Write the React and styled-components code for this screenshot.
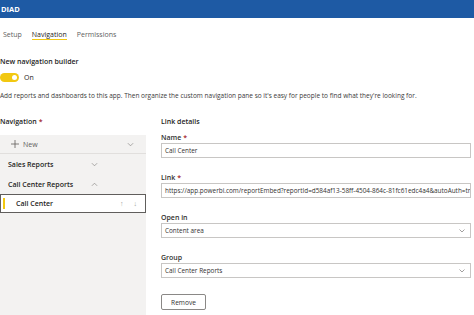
import React from "react";
import styled, { createGlobalStyle } from "styled-components";

const Global = createGlobalStyle`
  body {
    margin: 0;
    font-family: "Open Sans", "Noto Sans", sans-serif;
    color: #252423;
    background: #fff;
    overflow: hidden;
  }
  * { box-sizing: border-box; }
`;

const Page = styled.div`
  width: 474px;
  height: 315px;
  overflow: hidden;
  font-size: 7px;
  line-height: 9px;
`;

const Header = styled.div`
  height: 18px;
  background: #1e5aa4;
  color: #fff;
  font-weight: 700;
  font-size: 7.5px;
  display: flex;
  align-items: center;
  padding-left: 1px;
`;

const Tabs = styled.div`
  display: flex;
  gap: 10px;
  padding: 11.5px 0 0 3px;
`;

const Tab = styled.div`
  color: ${(p) => (p.active ? "#252423" : "#605e5c")};
  position: relative;
  height: 9px;
  &::after {
    content: "";
    display: ${(p) => (p.active ? "block" : "none")};
    position: absolute;
    left: 0;
    right: 0;
    bottom: -1.5px;
    height: 1.5px;
    background: #f2c811;
  }
`;

const Bold = styled.div`
  font-weight: 600;
  margin-top: ${(p) => p.mt || 0}px;
`;

const ToggleRow = styled.div`
  display: flex;
  align-items: center;
  gap: 5px;
  margin-top: 7px;
  height: 9px;
`;

const Toggle = styled.div`
  width: 19px;
  height: 9px;
  border-radius: 5px;
  background: #f2c811;
  position: relative;
  &::after {
    content: "";
    position: absolute;
    right: 2px;
    top: 2px;
    width: 5px;
    height: 5px;
    border-radius: 50%;
    background: #fff;
  }
`;

const Desc = styled.div`
  margin-top: 9px;
  font-size: 6.5px;
  color: #3b3a39;
  white-space: nowrap;
`;

const Columns = styled.div`
  display: flex;
  margin-top: 17px;
`;

const LeftCol = styled.div`
  width: 146px;
  flex-shrink: 0;
`;

const RightCol = styled.div`
  flex: 1;
  min-width: 0;
  padding-left: 15px;
  padding-right: 3px;
`;

const Req = styled.span`
  color: #a4262c;
  margin-left: 2px;
`;

const Panel = styled.div`
  margin-top: 9.5px;
  background: #f3f2f1;
  height: 190px;
`;

const NavRow = styled.div`
  height: ${(p) => p.h || 20}px;
  display: flex;
  align-items: center;
  padding-left: ${(p) => p.pl || 8}px;
  font-weight: ${(p) => (p.bold ? 600 : 400)};
  color: ${(p) => (p.muted ? "#605e5c" : "#252423")};
  border-bottom: ${(p) => (p.divider ? "1px solid #e1dfdd" : "none")};
  position: relative;
`;

const Chevron = styled.svg`
  position: absolute;
  left: ${(p) => p.x}px;
  width: 7px;
  height: 5px;
`;

const Selected = styled.div`
  height: 19px;
  background: #fff;
  border: 1px solid #605e5c;
  display: flex;
  align-items: center;
  padding-left: 15px;
  font-weight: 600;
  position: relative;
  &::before {
    content: "";
    position: absolute;
    left: 2px;
    top: 3px;
    bottom: 3px;
    width: 2px;
    background: #f2c811;
  }
`;

const Arrows = styled.div`
  position: absolute;
  right: 8px;
  display: flex;
  gap: 10px;
  color: #a19f9d;
  font-size: 7px;
`;

const Field = styled.div`
  margin-top: ${(p) => p.mt || 0}px;
`;

const Label = styled.div`
  font-weight: 600;
  color: #323130;
  margin-bottom: 1px;
`;

const Input = styled.div`
  height: 15px;
  border: 1px solid #c8c6c4;
  display: flex;
  align-items: center;
  padding-left: 3px;
  padding-right: 3px;
  font-size: 6.4px;
  color: #323130;
  white-space: nowrap;
  overflow: hidden;
  position: relative;
`;

const SelectChevron = styled.svg`
  position: absolute;
  right: 5px;
  width: 6px;
  height: 4px;
`;

const Button = styled.div`
  margin-top: 16px;
  width: 45px;
  height: 16px;
  border: 1px solid #8a8886;
  border-radius: 2px;
  display: flex;
  align-items: center;
  justify-content: center;
  font-size: 6.6px;
  color: #323130;
`;

const ChevDown = ({ x }) => (
  <Chevron x={x} viewBox="0 0 8 5">
    <path d="M1 1l3 3 3-3" fill="none" stroke="#8a8886" strokeWidth="0.8" />
  </Chevron>
);

const ChevUp = ({ x }) => (
  <Chevron x={x} viewBox="0 0 8 5">
    <path d="M1 4l3-3 3 3" fill="none" stroke="#8a8886" strokeWidth="0.8" />
  </Chevron>
);

const SelectIcon = () => (
  <SelectChevron viewBox="0 0 6 4">
    <path d="M0.5 0.5l2.5 2.5 2.5-2.5" fill="none" stroke="#8a8886" strokeWidth="0.8" />
  </SelectChevron>
);

export default function App() {
  return (
    <Page>
      <Global />
      <Header>DIAD</Header>
      <Tabs>
        <Tab>Setup</Tab>
        <Tab active>Navigation</Tab>
        <Tab>Permissions</Tab>
      </Tabs>
      <Bold mt={18}>New navigation builder</Bold>
      <ToggleRow>
        <Toggle />
        <span>On</span>
      </ToggleRow>
      <Desc>
        Add reports and dashboards to this app. Then organize the custom navigation pane so it's easy for people to find what they're looking for.
      </Desc>
      <Columns>
        <LeftCol>
          <Bold>
            Navigation<Req>*</Req>
          </Bold>
          <Panel>
            <NavRow h={19} pl={11} muted divider>
              <svg width="8" height="8" viewBox="0 0 8 8" style={{ marginRight: 4 }}>
                <path d="M4 0v8M0 4h8" stroke="#605e5c" strokeWidth="0.8" />
              </svg>
              New
              <ChevDown x={127} />
            </NavRow>
            <NavRow bold>
              Sales Reports
              <ChevDown x={91} />
            </NavRow>
            <NavRow bold>
              Call Center Reports
              <ChevUp x={91} />
            </NavRow>
            <Selected>
              Call Center
              <Arrows>
                <span>↑</span>
                <span>↓</span>
              </Arrows>
            </Selected>
          </Panel>
        </LeftCol>
        <RightCol>
          <Bold>Link details</Bold>
          <Field mt={7.5}>
            <Label>
              Name<Req>*</Req>
            </Label>
            <Input>Call Center</Input>
          </Field>
          <Field mt={15}>
            <Label>
              Link<Req>*</Req>
            </Label>
            <Input>
              https://app.powerbi.com/reportEmbed?reportId=d584af13-58ff-4504-864c-81fc61edc4a4&amp;autoAuth=true
            </Input>
          </Field>
          <Field mt={15}>
            <Label>Open in</Label>
            <Input>
              Content area
              <SelectIcon />
            </Input>
          </Field>
          <Field mt={15}>
            <Label>Group</Label>
            <Input>
              Call Center Reports
              <SelectIcon />
            </Input>
          </Field>
          <Button>Remove</Button>
        </RightCol>
      </Columns>
    </Page>
  );
}
